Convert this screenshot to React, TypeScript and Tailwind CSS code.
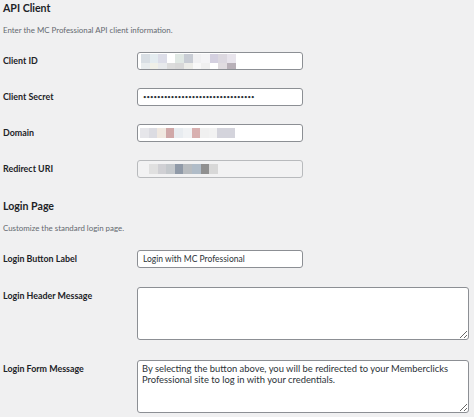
import React from 'react';

const clientIdTop = ['#d8dee4', '#e4ecf0', '#dcdde8', '#ffffff', '#e0e8e4', '#c8ccd4', '#f0f0f2', '#f4f4f6', '#d4d0e0', '#dcd8e0', '#e8e4ec'];
const clientIdBottom = ['#e8ecee', '#f0f0e8', '#e8eaec', '#dcdcdc', '#d8d8d8', '#ecece8', '#f8f8f8', '#f0f0f0', '#ffffff', '#e0dce0', '#b8b0b8'];
const domainBlocks = ['#e6e6ea', '#dcdce2', '#f0e8e0', '#d0a8a8', '#e8ecf0', '#f0f2f4', '#d8b0b0', '#f0f0f0', '#f2f2f2', '#d4d4dc', '#d4d4dc'];
const redirectBlocks = ['#e0e0e0', '#d0d0d4', '#c4c8cc', '#909aa8', '#b8bcc0', '#b0bcc8', '#909090', '#d8d8d8'];

function Blocks({ colors, h }: { colors: string[]; h: string }) {
  return (
    <div className="flex">
      {colors.map((c, i) => (
        <div key={i} className={`w-[8.6px] ${h}`} style={{ backgroundColor: c }} />
      ))}
    </div>
  );
}

function Row({ label, children, tall }: { label: string; children: React.ReactNode; tall?: boolean }) {
  return (
    <div className={`flex items-start ${tall ? 'py-[10px]' : 'py-[9px]'}`}>
      <div className="w-[134px] text-[8.9px] font-bold leading-[18px] text-[#1d2327]">{label}</div>
      {children}
    </div>
  );
}

const boxCls = 'w-[166px] h-[18px] rounded-[3px] border border-[#8c8f94] bg-white';
const areaCls =
  "w-[332px] h-[53px] rounded-[3px] border border-[#8c8f94] bg-white px-[4px] py-[2px] font-['Lato',sans-serif] text-[9.4px] leading-[11px] text-[#2c3338] outline-none";

export default function App() {
  return (
    <div className="min-h-screen w-full bg-[#f0f0f1] pl-[3px] font-['Lato',sans-serif] text-[#1d2327]">
      {/* API Client */}
      <h2 className="text-[10.6px] font-bold leading-[16px]">API Client</h2>
      <p className="mt-[8px] text-[7.9px] leading-[12px] text-[#646970]">
        Enter the MC Professional API client information.
      </p>
      <div className="mt-[7px]">
        <Row label="Client ID">
          <div className={`${boxCls} flex flex-col justify-center pl-[3px]`}>
            <Blocks colors={clientIdTop} h="h-[9px]" />
            <Blocks colors={clientIdBottom} h="h-[6px]" />
          </div>
        </Row>
        <Row label="Client Secret">
          <div className={`${boxCls} flex items-center pl-[5px]`}>
            <span className="text-[6px] leading-none tracking-[0px] text-[#2c3338]">
              ••••••••••••••••••••••••••••••••
            </span>
          </div>
        </Row>
        <Row label="Domain">
          <div className={`${boxCls} flex items-center pl-[2px]`}>
            <Blocks colors={domainBlocks} h="h-[10px]" />
          </div>
        </Row>
        <Row label="Redirect URI">
          <div className="w-[166px] h-[18px] rounded-[3px] border border-[#b8babd] bg-[#f2f2f3] flex items-center pl-[11px]">
            <Blocks colors={redirectBlocks} h="h-[10px]" />
          </div>
        </Row>
      </div>

      {/* Login Page */}
      <h2 className="mt-[11px] text-[10.6px] font-bold leading-[16px]">Login Page</h2>
      <p className="mt-[8px] text-[7.9px] leading-[12px] text-[#646970]">Customize the standard login page.</p>
      <div className="mt-[7px]">
        <Row label="Login Button Label">
          <div className={`${boxCls} flex items-center px-[5px] text-[8.5px] text-[#2c3338]`}>
            Login with MC Professional
          </div>
        </Row>
        <Row label="Login Header Message" tall>
          <textarea readOnly className={areaCls} defaultValue="" />
        </Row>
        <Row label="Login Form Message" tall>
          <textarea
            readOnly
            className={areaCls}
            defaultValue="By selecting the button above, you will be redirected to your Memberclicks Professional site to log in with your credentials."
          />
        </Row>
      </div>
    </div>
  );
}
